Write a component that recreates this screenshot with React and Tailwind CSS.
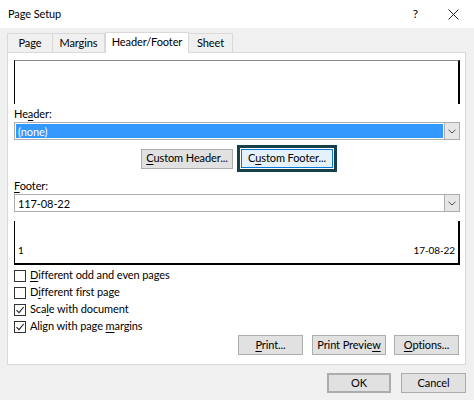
import React from "react";

const FONT = { fontFamily: 'Lato, "Noto Sans", sans-serif', letterSpacing: "-0.1px" };

function U({ children }) {
  return <span className="underline underline-offset-2">{children}</span>;
}

function Btn({ w, children, className = "" }) {
  return (
    <div className={`h-[20px] ${w} flex items-center justify-center bg-[#e1e1e1] border border-[#adadad] text-[11px] ${className}`}>
      <span className="whitespace-nowrap">{children}</span>
    </div>
  );
}

function Chevron() {
  return (
    <svg width="8" height="5" viewBox="0 0 8 5">
      <path d="M0.5 0.8 L4 4 L7.5 0.8" fill="none" stroke="#555" strokeWidth="1" />
    </svg>
  );
}

function Combo({ children, selected }) {
  return (
    <div className="h-[18px] flex border border-[#adadad] bg-white">
      <div className="flex-1 p-[1px] flex">
        <div className={`flex-1 flex items-center pl-[2px] text-[11px] leading-none ${selected ? "bg-[#3399ff] text-white" : "text-black"}`}>
          {children}
        </div>
      </div>
      <div className="w-[15px] flex items-center justify-center bg-[#e6e6e6] border-l border-[#adadad]">
        <Chevron />
      </div>
    </div>
  );
}

function Check({ checked, children }) {
  return (
    <div className="h-[17px] flex items-center gap-[4px]">
      <div className="w-[12px] h-[12px] border border-[#333] bg-white flex items-center justify-center">
        {checked && (
          <svg width="10" height="10" viewBox="0 0 10 10">
            <path d="M1.5 5.2 L4 7.6 L8.7 2" fill="none" stroke="#222" strokeWidth="1.1" />
          </svg>
        )}
      </div>
      <span className="text-[11px] whitespace-nowrap">{children}</span>
    </div>
  );
}

export default function App() {
  const tabs = ["Page", "Margins", "Header/Footer", "Sheet"];
  const widths = ["w-[46px]", "w-[53px]", "w-[84px]", "w-[45px]"];

  return (
    <div className="w-[474px] h-[400px] bg-[#f0f0f0] overflow-hidden text-black" style={FONT}>
      {/* title bar */}
      <div className="h-[28px] bg-white flex items-center pl-[8px] text-[11px]">
        <span>Page Setup</span>
        <span className="ml-auto mr-[30px] text-[12px]">?</span>
        <svg className="mr-[15px]" width="11" height="11" viewBox="0 0 11 11">
          <path d="M0.5 0.5 L10.5 10.5 M10.5 0.5 L0.5 10.5" stroke="#222" strokeWidth="1" />
        </svg>
      </div>

      {/* tabs */}
      <div className="h-[24px] flex items-end pl-[7px]">
        {tabs.map((t, i) => {
          const sel = i === 2;
          return (
            <div
              key={t}
              className={`${widths[i]} flex items-center justify-center text-[11px] border-t border-x border-[#d9d9d9] ${
                sel ? "h-[21px] bg-white -mb-px relative z-10 pb-[2px]" : "h-[19px] bg-[#f0f0f0] -ml-px first:ml-0"
              }`}
            >
              {t}
            </div>
          );
        })}
      </div>

      {/* panel */}
      <div className="ml-[7px] w-[459px] h-[313px] border border-[#d9d9d9] bg-white pl-[6px] pr-[5px] pt-[7px]">
        <div className="h-[44px] border-t border-t-[#8a8a8a] border-l border-l-black border-r-2 border-r-black" />

        <div className="mt-[3px] h-[15px] flex items-center text-[11px]">
          <span>He<U>a</U>der:</span>
        </div>
        <Combo selected>(none)</Combo>

        <div className="mt-[5px] h-[27px] flex items-center pl-[127px] gap-[4px]">
          <Btn w="w-[92px]" className="h-[19px]">
            <U>C</U>ustom Header...
          </Btn>
          <div className="w-[100px] h-[27px] border-[3px] border-[#173f47] p-[1px]">
            <div className="w-full h-full flex items-center justify-center bg-[#e5f1fb] border border-[#0078d7] text-[11px]">
              <span className="whitespace-nowrap">C<U>u</U>stom Footer...</span>
            </div>
          </div>
        </div>

        <div className="mt-[7px] h-[15px] flex items-center text-[11px]">
          <span><U>F</U>ooter:</span>
        </div>
        <Combo>117-08-22</Combo>

        <div className="mt-[9px] h-[44px] border-l border-l-black border-r-2 border-r-black border-b-2 border-b-black flex items-end justify-between px-[3px] pb-[5px] text-[10px]">
          <span>1</span>
          <span>17-08-22</span>
        </div>

        <div className="mt-[2px]">
          <Check>
            <U>D</U>ifferent odd and even pages
          </Check>
          <Check>
            D<U>i</U>fferent first page
          </Check>
          <Check checked>
            Sca<U>l</U>e with document
          </Check>
          <Check checked>
            Align with page <U>m</U>argins
          </Check>
        </div>

        <div className="flex justify-end pr-[1px]">
          <Btn w="w-[65px]">
            <U>P</U>rint...
          </Btn>
          <Btn w="w-[74px]" className="ml-[9px]">
            Print Previe<U>w</U>
          </Btn>
          <Btn w="w-[65px]" className="ml-[8px]">
            <U>O</U>ptions...
          </Btn>
        </div>
      </div>

      {/* dialog buttons */}
      <div className="mt-[8px] flex justify-end pr-[8px] gap-[10px]">
        <Btn w="w-[64px]" className="border-2 border-[#0078d7]">OK</Btn>
        <Btn w="w-[65px]">Cancel</Btn>
      </div>
    </div>
  );
}
